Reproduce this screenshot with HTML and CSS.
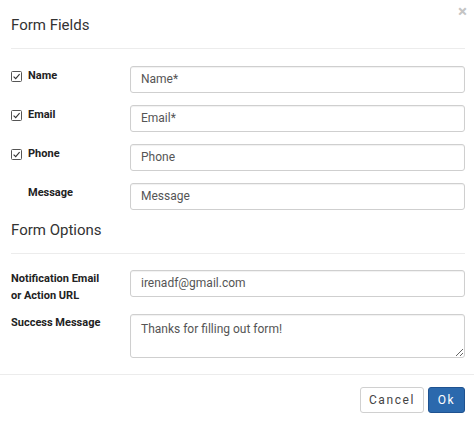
FILE: index.html
```html
<!DOCTYPE html>
<html>
<head>
<meta charset="utf-8">
<link rel="stylesheet" href="styles.css">
</head>
<body>
<div class="modal">
  <div class="head">
    <h2 class="title">Form Fields</h2>
    <span class="close">×</span>
  </div>
  <div class="fields">
    <div class="row">
      <div class="label"><svg class="cb" viewBox="0 0 12 12" width="12" height="12"><rect x="0.5" y="0.5" width="10" height="10" rx="1" fill="#fff" stroke="#555"/><path d="M2.6 5.6 L4.7 7.7 L8.6 3.2" fill="none" stroke="#333" stroke-width="1.1"/></svg><span>Name</span></div>
      <div class="input">Name*</div>
    </div>
    <div class="row">
      <div class="label"><svg class="cb" viewBox="0 0 12 12" width="12" height="12"><rect x="0.5" y="0.5" width="10" height="10" rx="1" fill="#fff" stroke="#555"/><path d="M2.6 5.6 L4.7 7.7 L8.6 3.2" fill="none" stroke="#333" stroke-width="1.1"/></svg><span>Email</span></div>
      <div class="input">Email*</div>
    </div>
    <div class="row">
      <div class="label"><svg class="cb" viewBox="0 0 12 12" width="12" height="12"><rect x="0.5" y="0.5" width="10" height="10" rx="1" fill="#fff" stroke="#555"/><path d="M2.6 5.6 L4.7 7.7 L8.6 3.2" fill="none" stroke="#333" stroke-width="1.1"/></svg><span>Phone</span></div>
      <div class="input">Phone</div>
    </div>
    <div class="row">
      <div class="label"><span class="nocb"></span><span>Message</span></div>
      <div class="input">Message</div>
    </div>
  </div>
  <div class="subhead">
    <h2 class="title">Form Options</h2>
  </div>
  <div class="options">
    <div class="row">
      <div class="label plain">Notification Email or Action URL</div>
      <div class="input">irenadf@gmail.com</div>
    </div>
    <div class="row">
      <div class="label plain">Success Message</div>
      <textarea class="area">Thanks for filling out form!</textarea>
    </div>
  </div>
  <div class="foot">
    <button class="btn cancel">Cancel</button>
    <button class="btn ok">Ok</button>
  </div>
</div>
</body>
</html>
```
FILE: styles.css
```css
html, body {
  margin: 0;
  padding: 0;
  background: #fff;
}
body {
  font-family: Roboto, "Liberation Sans", Arial, sans-serif;
  color: #222;
}
.modal {
  width: 474px;
  height: 421px;
  box-sizing: border-box;
}
.head {
  margin: 0 9px 0 11px;
  padding-top: 15px;
  padding-bottom: 13px;
  border-bottom: 1px solid #ececec;
  display: flex;
  justify-content: space-between;
  align-items: flex-start;
  height: 20px;
}
.title {
  margin: 0;
  font-size: 15px;
  font-weight: 400;
  line-height: 20px;
  color: #333;
}
.close {
  margin-top: -14px;
  margin-right: -2px;
  font-size: 17px;
  font-weight: 700;
  line-height: 20px;
  color: #c4c4c4;
}
.fields {
  padding: 17px 9px 0 11px;
  display: flex;
  flex-direction: column;
  gap: 12px;
}
.row {
  display: flex;
  align-items: flex-start;
}
.label {
  width: 119px;
  flex: none;
  display: flex;
  align-items: center;
  font-size: 11px;
  font-weight: 700;
  line-height: 17px;
  padding-top: 1px;
  color: #222;
}
.label.plain {
  display: block;
  padding-top: 0;
  padding-right: 20px;
  box-sizing: border-box;
}
.cb {
  flex: none;
  margin-right: 5px;
  margin-top: 2px;
}
.nocb {
  width: 17px;
  flex: none;
}
.input {
  flex: 1;
  height: 27px;
  box-sizing: border-box;
  border: 1px solid #cfcfcf;
  border-radius: 3px;
  box-shadow: inset 0 1px 1px rgba(0,0,0,0.06);
  padding: 0 10px;
  font-size: 12px;
  line-height: 25px;
  color: #555;
}
.subhead {
  margin: 0 9px 0 11px;
  padding-top: 10px;
  padding-bottom: 13px;
  border-bottom: 1px solid #ececec;
  height: 20px;
}
.options {
  padding: 16px 9px 16px 11px;
  display: flex;
  flex-direction: column;
  gap: 10px;
  border-bottom: 1px solid #ececec;
}
.area {
  flex: 1;
  height: 44px;
  box-sizing: border-box;
  border: 1px solid #cfcfcf;
  border-radius: 3px;
  box-shadow: inset 0 1px 1px rgba(0,0,0,0.06);
  padding: 6px 10px;
  margin: 0;
  font-family: Roboto, "Liberation Sans", Arial, sans-serif;
  font-size: 12px;
  line-height: 16px;
  color: #555;
  resize: vertical;
  outline: none;
}
.foot {
  padding: 12px 9px 0 0;
  display: flex;
  justify-content: flex-end;
  gap: 4px;
}
.btn {
  height: 26px;
  box-sizing: border-box;
  border-radius: 3px;
  font-family: Roboto, "Liberation Sans", Arial, sans-serif;
  font-size: 12px;
  letter-spacing: 1.6px;
  padding: 0;
  margin: 0;
  cursor: pointer;
}
.cancel {
  width: 64px;
  background: #fff;
  border: 1px solid #d0d0d0;
  color: #444;
}
.ok {
  width: 37px;
  background: #2b69ad;
  border: 1px solid #1f5290;
  color: #fff;
}
```
